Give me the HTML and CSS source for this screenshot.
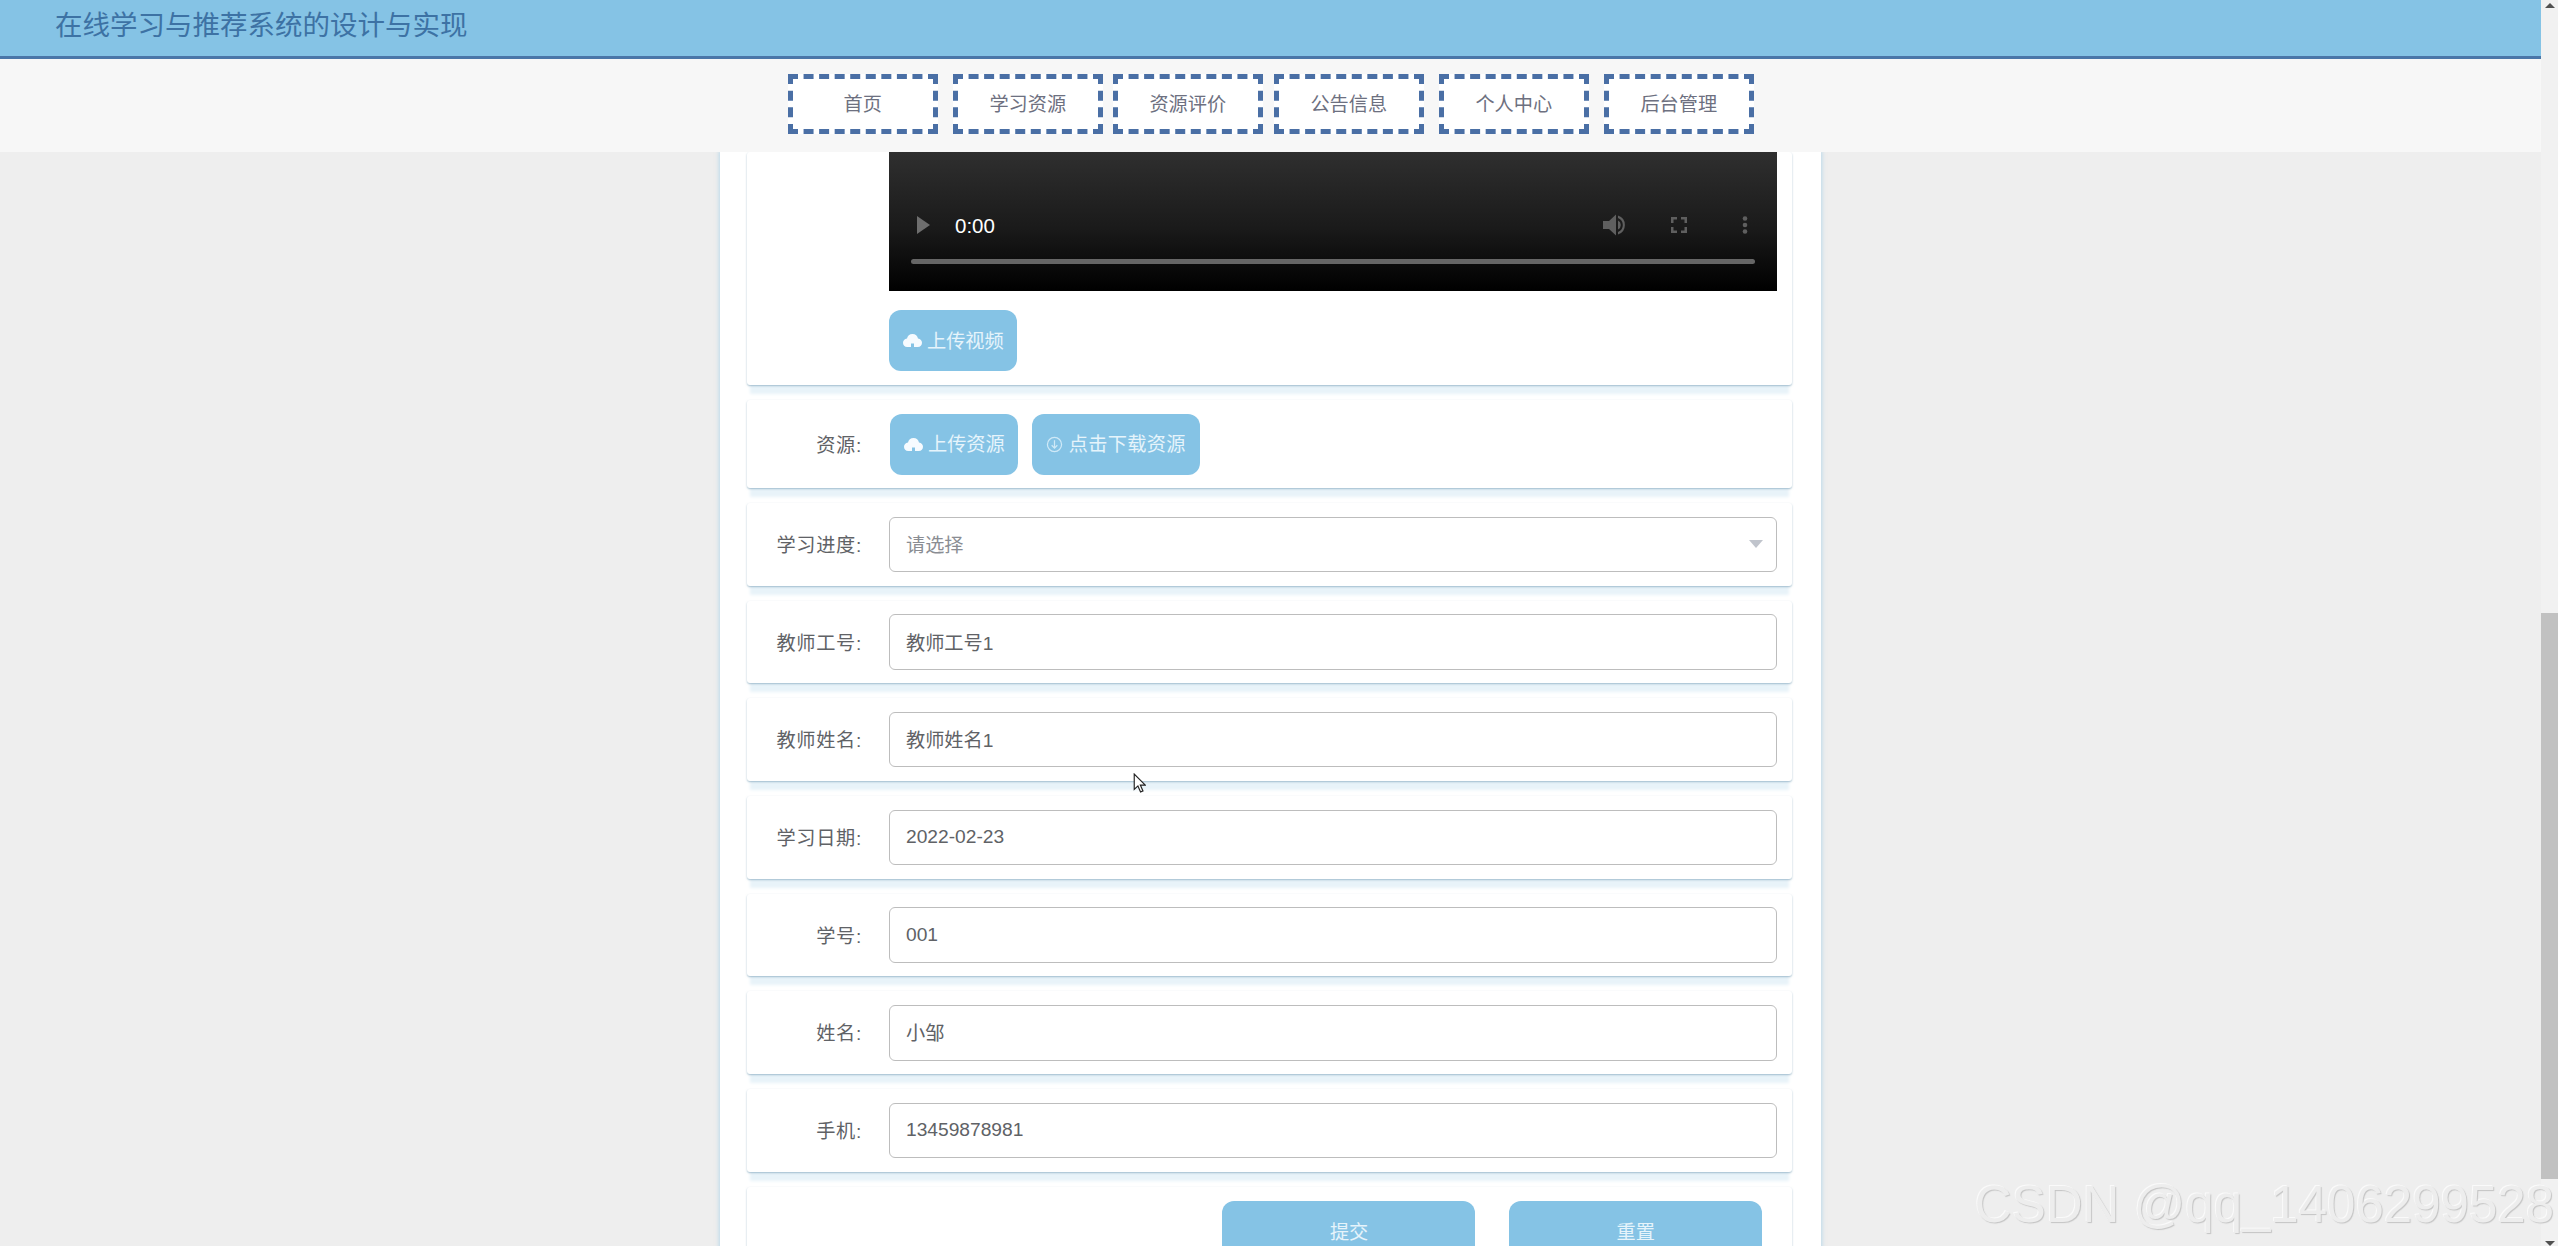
FILE: index.html
```html
<!DOCTYPE html>
<html lang="zh-CN">
<head>
<meta charset="utf-8">
<title>在线学习与推荐系统的设计与实现</title>
<link rel="stylesheet" href="styles.css">
</head>
<body>
<div class="page">
  <div class="main">
    <header class="header"><h1 class="title">在线学习与推荐系统的设计与实现</h1></header>
    <nav class="nav">
      <a class="nav-item gap-a">首页</a>
      <a class="nav-item gap-b">学习资源</a>
      <a class="nav-item gap-c">资源评价</a>
      <a class="nav-item gap-a">公告信息</a>
      <a class="nav-item gap-a">个人中心</a>
      <a class="nav-item">后台管理</a>
    </nav>
    <div class="viewport">
      <main class="panel">
        <section class="card card-video">
          <div class="video">
            <div class="video-row">
              <svg class="v-icon v-play" viewBox="0 0 20 20"><path d="M5 1 18 10 5 19z"/></svg>
              <span class="v-time">0:00</span>
              <span class="v-spacer"></span>
              <svg class="v-icon v-volume" viewBox="0 0 24 24"><path d="M1 8h6l7-6.500v21L7 16H1z"/><path d="M16 7.500a5 5 0 0 1 0 9zM16 2.500a10 10 0 0 1 0 19v-2.500a7.500 7.500 0 0 0 0-14z"/></svg>
              <svg class="v-icon v-full" viewBox="0 0 18 18"><path d="M1 1h6v2.500H3.500V7H1zM11 1h6v6h-2.500V3.500H11zM1 11h2.500v3.500H7V17H1zM14.500 11H17v6h-6v-2.500h3.500z"/></svg>
              <svg class="v-icon v-more" viewBox="0 0 20 20"><circle cx="10" cy="3.500" r="2.300"/><circle cx="10" cy="10" r="2.300"/><circle cx="10" cy="16.500" r="2.300"/></svg>
            </div>
            <div class="v-progress"></div>
          </div>
          <button class="btn"><svg class="btn-icon" viewBox="0 0 19 13"><path d="M9.500 0C12.500 0 14.500 2 15 4.500 17.500 5 19 6.700 19 8.800 19 11.200 17.300 13 14.800 13H11V9.500H8V13H4.200C1.700 13 0 11.200 0 8.800 0 6.700 1.500 5 4 4.500 4.500 2 6.500 0 9.500 0z"/></svg><span class="btn-text">上传视频</span></button>
        </section>
        <section class="card card-files">
          <span class="label">资源:</span>
          <div class="actions">
            <button class="btn"><svg class="btn-icon" viewBox="0 0 19 13"><path d="M9.500 0C12.500 0 14.500 2 15 4.500 17.500 5 19 6.700 19 8.800 19 11.200 17.300 13 14.800 13H11V9.500H8V13H4.200C1.700 13 0 11.200 0 8.800 0 6.700 1.500 5 4 4.500 4.500 2 6.500 0 9.500 0z"/></svg><span class="btn-text">上传资源</span></button>
            <button class="btn btn-download"><svg class="btn-icon-line" viewBox="0 0 18 18"><circle cx="9" cy="9" r="7.500"/><path d="M9 4.500v8M6 9.800l3 3 3-3"/></svg><span class="btn-text">点击下载资源</span></button>
          </div>
        </section>
        <section class="card field">
          <span class="label">学习进度:</span>
          <div class="input placeholder">请选择<svg class="caret" viewBox="0 0 14 8"><path d="M0 0h14L7 8z"/></svg></div>
        </section>
        <section class="card field"><span class="label">教师工号:</span><div class="input">教师工号1</div></section>
        <section class="card field"><span class="label">教师姓名:</span><div class="input">教师姓名1</div></section>
        <section class="card field"><span class="label">学习日期:</span><div class="input">2022-02-23</div></section>
        <section class="card field"><span class="label">学号:</span><div class="input">001</div></section>
        <section class="card field"><span class="label">姓名:</span><div class="input">小邹</div></section>
        <section class="card field"><span class="label">手机:</span><div class="input">13459878981</div></section>
        <section class="card card-submit">
          <button class="btn btn-wide">提交</button>
          <button class="btn btn-wide">重置</button>
        </section>
      </main>
      <svg class="cursor" viewBox="0 0 12 19"><path d="M1 1v14.500l3.500-3.200 2.500 5.700 2.300-1-2.500-5.500H11.500z"/></svg>
    </div>
  </div>
  <aside class="scrollbar">
    <span class="arrow-up"></span>
    <div class="thumb"></div>
    <span class="arrow-down"></span>
  </aside>
  <div class="watermark">CSDN @qq_1406299528</div>
</div>
</body>
</html>
```

FILE: styles.css
```css
* { box-sizing: border-box; }
html, body { margin: 0; height: 100%; overflow: hidden; }
body {
  background: #eeeeee;
  font-family: "Liberation Sans", "Noto Sans CJK SC", sans-serif;
  font-size: 19.2px;
  color: #606266;
}
.page { position: relative; display: flex; height: 1246px; overflow: hidden; }
.main { flex: 1; min-width: 0; display: flex; flex-direction: column; }

.header {
  height: 59px;
  flex: none;
  background: #85c3e5;
  border-bottom: 3px solid #4a76a8;
  padding: 0 0 10px 55px;
  display: flex;
  align-items: center;
}
.title { margin: 0; font-size: 27.5px; font-weight: 400; color: #3d72a4; }

.nav {
  height: 93px;
  flex: none;
  background: #f7f7f7;
  padding: 15px 0 0 787.500px;
  display: flex;
  align-items: flex-start;
}
.nav-item {
  width: 150.500px;
  height: 60px;
  flex: none;
  display: flex;
  align-items: center;
  justify-content: center;
  padding-bottom: 3px;
  background: #ffffff;
  border: 5px dashed #4a6fa5;
  color: #6d7080;
}
.gap-a { margin-right: 14.500px; }
.gap-b { margin-right: 9.500px; }
.gap-c { margin-right: 10.500px; }

.viewport { position: relative; flex: 1; min-height: 0; overflow: hidden; }
.panel {
  width: 1101px;
  margin-left: 720px;
  min-height: 100%;
  padding: 0 29px 0 27px;
  background: #ffffff;
  box-shadow: 0 0 4px 1px rgba(133, 195, 229, 0.5);
}
.card {
  background: #ffffff;
  margin-bottom: 15px;
  border-radius: 3px;
  box-shadow: 0 1px 2px rgba(110, 150, 175, 0.6), 0 12px 3px -3px #e8f3f9;
}
.card-video { padding: 0 15px 14px 142px; }
.video {
  height: 139px;
  display: flex;
  flex-direction: column;
  justify-content: flex-end;
  padding-bottom: 27.500px;
  margin-bottom: 19px;
  background: linear-gradient(#2f2f2f, #1a1a1a 55%, #000000);
}
.video-row { display: flex; align-items: center; height: 40px; padding: 0 22px 0 23px; margin-bottom: 13.500px; }
.v-icon { flex: none; fill: #5f5f5f; }
.v-play { width: 20px; height: 20px; margin-right: 23px; fill: #6e6e6e; }
.v-volume { width: 24px; height: 24px; margin-right: 44px; }
.v-full { width: 18px; height: 18px; margin-right: 47px; }
.v-more { width: 20px; height: 20px; }
.v-time { color: #ffffff; font-size: 20.500px; padding-top: 1px; }
.v-spacer { flex: 1; }
.v-progress { height: 5px; margin: 0 22px; background: #666666; border-radius: 3px; }

.btn {
  height: 61px;
  padding: 0 13px 0 13.500px;
  border: 0;
  border-radius: 12px;
  background: #85c3e5;
  color: #e6f4fb;
  font: inherit;
  display: inline-flex;
  align-items: center;
}
.btn-icon { width: 19px; height: 13px; margin: 0 5.500px 0 0; fill: #f6fbff; flex: none; }
.btn-icon-line { width: 17px; height: 17px; margin-right: 6px; fill: none; stroke: #cfe9f7; stroke-width: 1.300; flex: none; }
.btn-text { margin-top: -2px; }
.btn-download { padding: 0 14px; letter-spacing: 0.300px; }
.actions { display: flex; gap: 14px; padding-left: 1px; margin-left: 27px; }

.label { width: 115px; flex: none; text-align: right; color: #606266; letter-spacing: 0.700px; padding-bottom: 1px; }
.card-files { height: 88px; display: flex; align-items: center; }
.field { height: 82.700px; display: flex; align-items: center; }
.input {
  flex: 1;
  height: 55.500px;
  margin: 0 15px 0 27px;
  padding: 0 16px 1px;
  display: flex;
  align-items: center;
  justify-content: space-between;
  background: #ffffff;
  border: 1.500px solid #bdbdbd;
  border-radius: 6px;
}
.placeholder { color: #8a8d93; }
.caret { width: 14px; height: 8px; fill: #c0c4cc; margin-right: -3px; }

.card-submit { display: flex; justify-content: flex-end; padding: 14px 30px 14px 0; gap: 33.700px; }
.btn-wide { width: 253px; height: 60px; justify-content: center; }

.cursor { position: absolute; left: 1133px; top: 621px; width: 13px; height: 20px; fill: #ffffff; stroke: #222222; stroke-width: 1.100; }

.scrollbar { width: 17px; flex: none; display: flex; flex-direction: column; align-items: center; background: #f1f1f1; height: 1246px; }
.arrow-up { width: 0; height: 0; flex: none; margin-top: 3px; border: 5px solid transparent; border-top: 0; border-bottom: 5px solid #505050; }
.thumb { width: 17px; height: 566px; flex: none; margin-top: 605px; background: #c1c1c1; }
.arrow-down { width: 0; height: 0; flex: none; margin-top: auto; border: 5px solid transparent; border-bottom: 0; border-top: 5px solid #505050; }

.watermark {
  position: absolute;
  right: 4px;
  top: 1176px;
  font-size: 51px;
  line-height: 58px;
  white-space: nowrap;
  color: #ededed;
  text-shadow: 1px 1px 1px #c4c4c4, -1px -1px 0 #fafafa;
}
```
